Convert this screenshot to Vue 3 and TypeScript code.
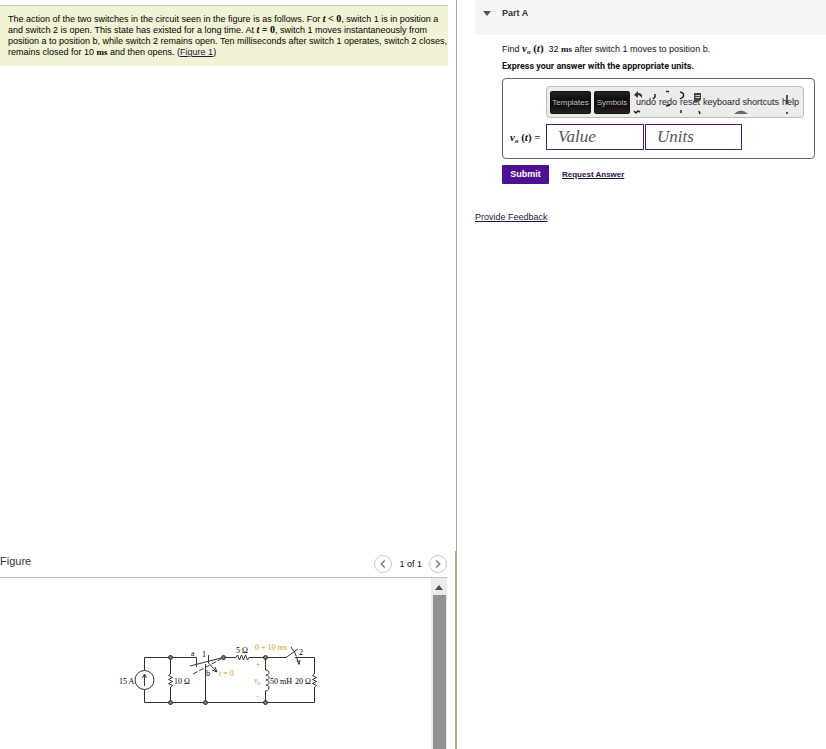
<script setup lang="ts">
import { ref } from 'vue'

const value = ref('')
const units = ref('')
const open = ref(true)
const tools: string[] = ['undo', 'redo', 'reset', 'keyboard shortcuts', 'help']
</script>

<template>
  <div class="page">
    <main class="left">
      <section class="problem">
        The action of the two switches in the circuit seen in the figure is as follows. For <span class="math"><i>t</i> &lt; 0</span>, switch 1 is in position a<br>
        and switch 2 is open. This state has existed for a long time. At <span class="math"><i>t</i> = 0</span>, switch 1 moves instantaneously from<br>
        position a to position b, while switch 2 remains open. Ten milliseconds after switch 1 operates, switch 2 closes,<br>
        remains closed for 10 <span class="math unit">ms</span> and then opens. (<a href="#figure">Figure 1</a>)
      </section>
      <section id="figure" class="figure">
        <header class="figure-head">
          <h2>Figure</h2>
          <nav class="pager">
            <button type="button" aria-label="Previous figure">
              <svg viewBox="0 0 18 18"><path d="M11 5 L7 9 L11 13" /></svg>
            </button>
            <span>1 of 1</span>
            <button type="button" aria-label="Next figure">
              <svg viewBox="0 0 18 18"><path d="M7 5 L11 9 L7 13" /></svg>
            </button>
          </nav>
        </header>
        <div class="figure-view">
          <div class="canvas">
            <svg class="circuit" viewBox="115 640 210 70">
              <g class="wire">
                <path d="M144.500 670V657.500H196.500V667M144.500 690V702.500H314.500V687M170.500 657V674L168.500 675.500L172.500 677.500L168.500 679.500L172.500 681.500L168.500 683.500L172.500 685.500L170.500 687V702M205.500 664V702" />
                <path d="M190 666L223 657.500H236L237.500 655L239.500 660L241.500 655L243.500 660L245.500 655L247.500 660L249 657.500H286L298 649" />
                <path d="M193 674L222 658.500" stroke-dasharray="5 2" />
                <path d="M208.500 655V663L216 671M212 670L217 672L215 667" />
                <path d="M265.500 657V670C270 670 270 675 266 675C270 675 270 680 266 680C270 680 270 685 266 685C270 685 270 691 265.500 691V702" />
                <path d="M295 657.500H314.500V674L312.500 675.500L316.500 677.500L312.500 679.500L316.500 681.500L312.500 683.500L316.500 685.500L314.500 687" />
                <path d="M291 647L295 653L299 664M297 660L299 665L300 660" stroke-dasharray="5 1" />
                <circle cx="144.500" cy="680" r="9.500" />
                <path d="M144.500 686V675M142.500 678L144.500 674L146.500 678" />
              </g>
              <g class="node">
                <circle cx="170.500" cy="657.500" r="2" /><circle cx="170.500" cy="702.500" r="2" />
                <circle cx="205.500" cy="702.500" r="2" /><circle cx="223.500" cy="657.500" r="2" />
                <circle cx="265.500" cy="657.500" r="2" /><circle cx="265.500" cy="702.500" r="2" />
              </g>
              <g class="label">
                <text x="119" y="684">15 A</text>
                <text x="174" y="684">10 Ω</text>
                <text x="191" y="656">a</text>
                <text x="202" y="657">1</text>
                <text x="206" y="676">b</text>
                <text x="236" y="653">5 Ω</text>
                <text x="299" y="655">2</text>
                <text x="270" y="684">50 mH</text>
                <text x="295" y="684">20 Ω</text>
              </g>
              <g class="label gold">
                <text x="255" y="650">0 + 10 ms</text>
                <text x="219" y="676"><tspan font-style="italic">t</tspan> = 0</text>
                <text x="256" y="667">+</text>
                <text x="254" y="683" font-style="italic">v<tspan dy="2" font-size="6">o</tspan></text>
                <text x="256" y="699">−</text>
              </g>
            </svg>
          </div>
          <div class="scrollbar" aria-hidden="true">
            <svg viewBox="0 0 16 17"><path d="M4 12L8 7L12 12Z" fill="#505050" /></svg>
            <div class="thumb"></div>
          </div>
        </div>
      </section>
    </main>

    <aside class="right">
      <button class="part" type="button" :aria-expanded="open" @click="open = !open">
        <svg viewBox="0 0 8 5"><path d="M0 0H8L4 5Z" fill="#555" /></svg>
        <span>Part A</span>
      </button>
      <form v-show="open" class="body" @submit.prevent>
        <p>Find <span class="math"><i>v<sub>o</sub></i> (<i>t</i>)</span>&nbsp; 32 <span class="math unit">ms</span> after switch 1 moves to position b.</p>
        <p class="strong">Express your answer with the appropriate units.</p>
        <div class="answer">
          <div class="toolbar">
            <button class="dark templates" type="button">Templates</button>
            <button class="dark symbols" type="button">Symbols</button>
            <button v-for="tool in tools" :key="tool" class="tool" type="button">{{ tool }}</button>
            <svg class="marks" viewBox="632 87 170 30" aria-hidden="true">
              <path d="M634 95L638 91V93Q643 93 642 98Q640 95 638 95V98Z" fill="#333" />
              <path d="M634 111L636 113L638 111L640 112M655 94V97L653 99M666 91.500H669M666 106L670 105M680 92Q685 93 683 97L680 99M681 110V113M699 111L700 114M787 95V104M786 113H788" fill="none" stroke="#222" stroke-width="1.500" />
              <path d="M694 93H701V100L697 102H694Z" fill="#444" />
              <path d="M695.500 95.500H700M695.500 97.500H700" stroke="#ccc" />
              <path d="M734 114Q741 107 748 114Z" fill="#666" />
            </svg>
          </div>
          <label class="math" for="value"><i>v<sub>o</sub></i> (<i>t</i>) =</label>
          <div class="fields">
            <input id="value" v-model="value" type="text" placeholder="Value">
            <input v-model="units" type="text" placeholder="Units" aria-label="Units">
          </div>
        </div>
        <div class="actions">
          <button class="submit" type="submit">Submit</button>
          <a href="#answer">Request Answer</a>
        </div>
      </form>
      <a class="feedback" href="#feedback">Provide Feedback</a>
    </aside>
  </div>
</template>

<style>
body { margin: 0; background: #fff; }
</style>

<style scoped>
* { box-sizing: border-box; }
.page {
  display: grid;
  grid-template-columns: 457fr 369fr;
  min-height: 100vh;
  font: 9px/11px "Liberation Sans", Arial, sans-serif;
  color: #111;
}
button { font: inherit; padding: 0; cursor: pointer; }
a { color: #2b1040; text-decoration: underline; text-underline-offset: 1px; }
.left {
  display: flex;
  flex-direction: column;
  justify-content: space-between;
  min-width: 0;
  padding-top: 5px;
  border-right: 1px solid #b7a58d;
}
.problem {
  margin-right: 8px;
  padding: 8px;
  min-height: 61px;
  border-top: 1px solid #c9c9c4;
  background: #f2f3d5;
  color: #000;
  white-space: nowrap;
}
.math { font-family: "Liberation Serif", "Times New Roman", serif; font-size: 11px; line-height: 9px; font-weight: bold; }
.math sub { font-size: 7px; line-height: 0; vertical-align: -2px; }
.problem .math { font-size: 10px; }
.math.unit { font-size: 9px; }
.figure { border-right: 1px solid #b7a58d; }
.figure-head {
  display: flex;
  justify-content: space-between;
  align-items: center;
  height: 27px;
  margin-right: 8px;
  border-bottom: 1px solid #bfbfbf;
}
h2 { margin: 0 0 6px; font-size: 11px; font-weight: normal; color: #333; }
.pager { display: flex; align-items: center; gap: 7px; }
.pager button {
  width: 18px;
  height: 18px;
  border: 1px solid #c9c9c9;
  border-radius: 50%;
  background: #fff;
}
.pager svg { display: block; width: 16px; height: 16px; }
.pager path { fill: none; stroke: #777; stroke-width: 1.500; }
.figure-view { display: flex; height: 171px; margin-right: 8px; }
.canvas { flex: 1; padding: 62px 0 0 115px; }
.circuit { display: block; width: 210px; height: 70px; }
.wire { fill: none; stroke: #333; stroke-width: 1; }
.node { fill: #777; stroke: #333; }
.label { font: 8px "Liberation Serif", serif; fill: #000; stroke: none; }
.gold { fill: #d39a10; }
.scrollbar { display: flex; flex-direction: column; width: 16px; background: #ececec; }
.scrollbar svg { width: 16px; height: 17px; }
.thumb { flex: 1; margin: 0 1px 0 2px; background: #929292; }
.right { min-width: 0; padding-left: 18px; }
.part {
  display: flex;
  align-items: flex-start;
  gap: 11px;
  width: 100%;
  height: 35px;
  padding: 8px;
  border: 0;
  background: #f5f5f5;
  color: #333;
  font-weight: bold;
}
.part svg { width: 8px; height: 5px; margin-top: 3px; }
.body { padding: 9px 11px 0 27px; }
p { margin: 0 0 6px; white-space: nowrap; }
.strong { font-family: Roboto, sans-serif; font-weight: bold; }
.answer {
  display: grid;
  grid-template-columns: 43px 1fr;
  row-gap: 6px;
  align-items: center;
  height: 81px;
  padding: 7px 11px 8px 0;
  border: 1px solid #666;
  border-radius: 4px;
}
.toolbar {
  position: relative;
  grid-column: 2;
  justify-self: start;
  display: flex;
  align-items: center;
  gap: 3px;
  height: 32px;
  padding: 0 4px 0 3px;
  border: 1px solid #bbb;
  border-radius: 4px;
  background: #ececec;
  white-space: nowrap;
}
.toolbar button { flex: none; }
.dark {
  height: 23px;
  border: 1px solid #111;
  border-radius: 2px;
  background: linear-gradient(#222, #090707 50%, #2b2020);
  color: #c5c5c5;
}
.toolbar .dark { font-size: 8px; }
.templates { width: 41px; }
.symbols { width: 36px; }
.tool { border: 0; background: none; color: #222; }
.symbols + .tool { margin-left: 3px; }
.marks { position: absolute; left: 85px; top: 0; width: 170px; height: 30px; pointer-events: none; }
.answer label { padding-left: 7px; white-space: nowrap; }
.fields { display: grid; grid-template-columns: 98px 97px; gap: 1px; }
input {
  min-width: 0;
  height: 26px;
  padding: 0 11px;
  border: 1px solid #4b1979;
  border-radius: 0;
  font: italic 17px "Liberation Serif", serif;
}
input::placeholder { color: #555; opacity: 1; }
.actions { display: flex; align-items: center; gap: 13px; margin-top: 6px; font-size: 8px; font-weight: bold; }
.submit { width: 47px; height: 19px; border: 0; border-radius: 1px; background: #4f1091; color: #fff; font-size: 9px; }
.feedback { display: inline-block; margin-top: 28px; }
</style>
